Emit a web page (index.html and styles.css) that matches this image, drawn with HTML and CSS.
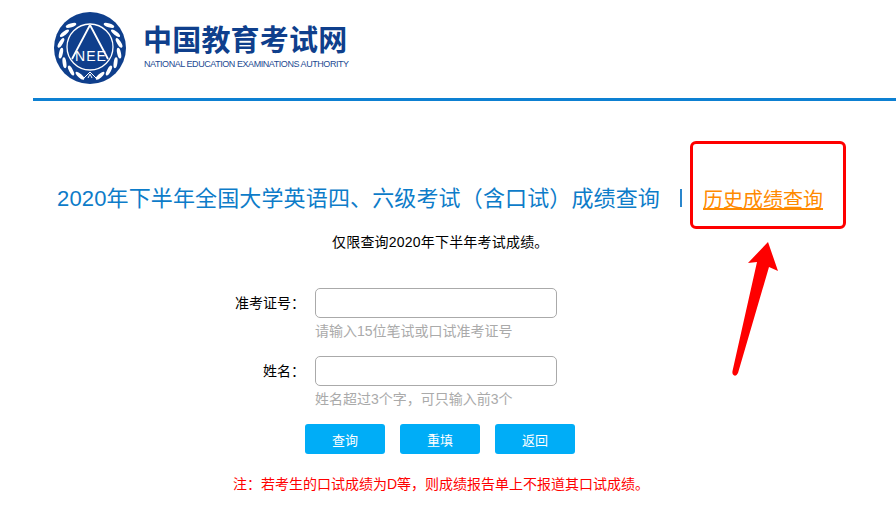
FILE: index.html
```html
<!DOCTYPE html>
<html lang="zh-CN">
<head>
    <meta charset="UTF-8">
    <title>成绩查询</title>
    <link rel="stylesheet" href="styles.css">
</head>
<body>

    <div class="header">
        <svg class="logo" width="72" height="72" viewBox="0 0 72 72">
            <circle cx="36" cy="36" r="36" fill="#0f3f8c"/>
            <circle cx="36" cy="35" r="23" fill="none" stroke="#fff" stroke-width="1.3"/>
            <path d="M36 13 L18 47 M36 13 L54 47" stroke="#fff" stroke-width="1.8" fill="none"/>
            <text x="37" y="49" class="logo-nee">NEE</text>
            <path d="M30 66 L36 60 L42 66 M34 66 L36 62 L38 66" stroke="#fff" stroke-width="1" fill="none"/>
            <g id="laurel" fill="#fff">
                <ellipse cx="36" cy="6.5" rx="5.5" ry="1.9" transform="rotate(-160 36 36) rotate(22 36 6.5)"/>
                <ellipse cx="36" cy="6.5" rx="5.5" ry="1.9" transform="rotate(-140 36 36) rotate(22 36 6.5)"/>
                <ellipse cx="36" cy="6.5" rx="5.5" ry="1.9" transform="rotate(-120 36 36) rotate(22 36 6.5)"/>
                <ellipse cx="36" cy="6.5" rx="5.5" ry="1.9" transform="rotate(-100 36 36) rotate(22 36 6.5)"/>
                <ellipse cx="36" cy="6.5" rx="5.5" ry="1.9" transform="rotate(-80 36 36) rotate(22 36 6.5)"/>
                <ellipse cx="36" cy="6.5" rx="5.5" ry="1.9" transform="rotate(-60 36 36) rotate(22 36 6.5)"/>
                <ellipse cx="36" cy="6.5" rx="5.5" ry="1.9" transform="rotate(-40 36 36) rotate(22 36 6.5)"/>
            </g>
            <use href="#laurel" transform="matrix(-1 0 0 1 72 0)"/>
        </svg>
        <div class="brand">
            <div class="brand-cn">中国教育考试网</div>
            <div class="brand-en">NATIONAL EDUCATION EXAMINATIONS AUTHORITY</div>
        </div>
    </div>

    <div class="title-row">
        <span class="title">2020年下半年全国大学英语四、六级考试（含口试）成绩查询</span>
        <span class="sep"></span>
        <a class="history" href="#">历史成绩查询</a>
    </div>

    <p class="notice">仅限查询2020年下半年考试成绩。</p>

    <form class="form">
        <label class="label">准考证号：</label>
        <div class="field">
            <input class="input" type="text">
            <p class="hint">请输入15位笔试或口试准考证号</p>
        </div>
        <label class="label">姓名：</label>
        <div class="field">
            <input class="input" type="text">
            <p class="hint">姓名超过3个字，可只输入前3个</p>
        </div>
    </form>

    <div class="buttons">
        <button class="btn" type="button">查询</button>
        <button class="btn" type="button">重填</button>
        <button class="btn" type="button">返回</button>
    </div>

    <p class="note">注：若考生的口试成绩为D等，则成绩报告单上不报道其口试成绩。</p>

    <!-- annotation drawn over the page -->
    <div class="mark-box"></div>
    <svg class="mark-arrow" width="60" height="140" viewBox="0 0 60 140">
        <path d="M36 0 L46 29 L37 25 L6 131 Q4 135 1.5 133 Q0 132 0.5 129 L25 20 L16 21 Z" fill="#fe0000"/>
    </svg>

</body>
</html>
```

FILE: styles.css
```css
body {
    font-family: "Liberation Sans", "Noto Sans CJK SC", sans-serif;
    margin: 0;
    padding: 0;
    background-color: #fff;
    color: #000;
    height: 518px;
    overflow: hidden;
    position: relative;
}
p {
    margin: 0;
}
.header {
    display: flex;
    align-items: flex-start;
    margin-left: 33px;
    padding: 12px 0 0 21px;
    height: 86px;
    border-bottom: 3px solid #0d80d2;
}
.logo {
    flex: none;
}
.logo-nee {
    font-family: "Liberation Sans", sans-serif;
    font-size: 14px;
    fill: #fff;
    text-anchor: middle;
    letter-spacing: 1px;
}
.brand {
    margin-left: 18px;
    padding-top: 11px;
    color: #0f3f8c;
}
.brand-cn {
    font-size: 29px;
    font-weight: 700;
    line-height: 36px;
    letter-spacing: 0.2px;
    margin-left: -1px;
    white-space: nowrap;
}
.brand-en {
    font-size: 9px;
    line-height: 11px;
    letter-spacing: -0.44px;
    white-space: nowrap;
    color: #1c4a92;
}
.title-row {
    display: flex;
    align-items: center;
    margin-top: 80px;
    padding-left: 57px;
    height: 34px;
}
.title {
    font-size: 22px;
    letter-spacing: 0.14px;
    color: #0d7cc9;
    white-space: nowrap;
    margin-bottom: 4px;
}
.sep {
    width: 2px;
    height: 18px;
    margin-left: 20px;
    background-color: #2a86cc;
}
.history {
    margin-left: 21px;
    font-size: 20px;
    color: #ff8a00;
    text-decoration: underline;
    white-space: nowrap;
}
.notice {
    margin-top: 16px;
    padding-left: 332px;
    font-size: 14px;
    line-height: 22px;
    letter-spacing: 0.2px;
}
.form {
    display: grid;
    grid-template-columns: 305px 242px;
    column-gap: 10px;
    row-gap: 12px;
    margin-top: 35px;
}
.label {
    text-align: right;
    font-size: 14px;
    line-height: 30px;
}
.input {
    display: block;
    box-sizing: border-box;
    width: 242px;
    height: 30px;
    border: 1px solid #aaa;
    border-radius: 5px;
    background-color: #fff;
    padding: 0 8px;
}
.hint {
    font-size: 14px;
    line-height: 26px;
    color: #aaa;
    white-space: nowrap;
}
.buttons {
    display: flex;
    gap: 15px;
    margin-top: 12px;
    padding-left: 305px;
}
.btn {
    width: 80px;
    height: 30px;
    padding: 0;
    border: none;
    border-radius: 3px;
    background-color: #00adf7;
    color: #fff;
    font-family: inherit;
    font-size: 13px;
    cursor: pointer;
}
.note {
    margin-top: 19px;
    padding-left: 233px;
    font-size: 14px;
    line-height: 22px;
    color: #f00;
    white-space: nowrap;
}
.mark-box {
    position: absolute;
    left: 690px;
    top: 141px;
    width: 150px;
    height: 82px;
    border: 3px solid #fe0000;
    border-radius: 6px;
}
.mark-arrow {
    position: absolute;
    left: 732px;
    top: 242px;
}
```
